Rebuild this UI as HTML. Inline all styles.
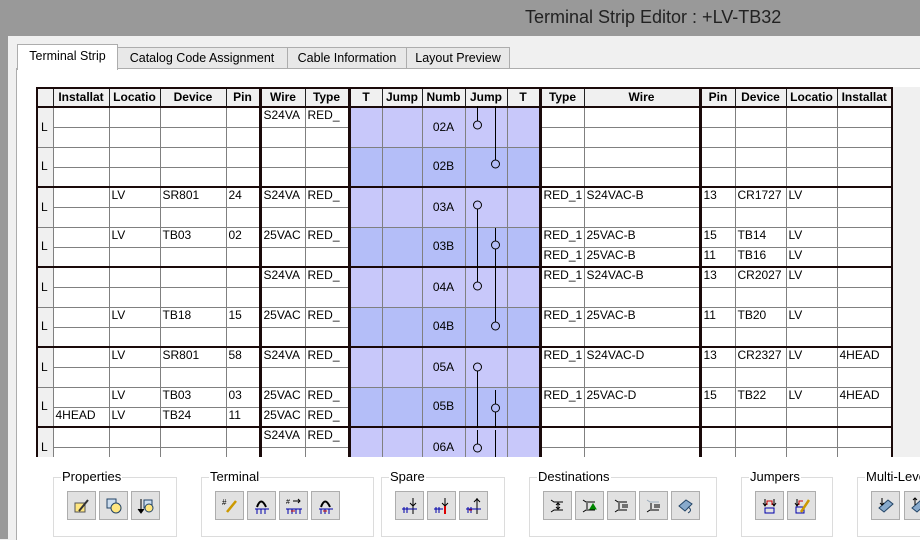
<!DOCTYPE html>
<html><head><meta charset="utf-8">
<style>
body{margin:0;width:920px;height:539px;overflow:hidden;background:#f0f0f0;font-family:"Liberation Sans",sans-serif;position:relative}
.title{position:absolute;left:0;top:0;width:920px;height:36px;background:#999}
.title span{position:absolute;left:525px;top:7px;font-size:18px;color:#222;font-family:"Liberation Sans",sans-serif}
.lstrip{position:absolute;left:0;top:36px;width:8px;height:503px;background:#999}
.page{position:absolute;left:16px;top:68px;width:904px;height:471px;background:#fff;border-top:1px solid #adadad;border-left:1px solid #adadad}
.tab{position:absolute;top:47px;height:20px;background:#e8e8e8;border:1px solid #adadad;border-bottom:none;font-size:12.5px;line-height:21px;text-align:center;color:#000}
.tab.act{top:44px;height:25px;background:#fff;z-index:2;line-height:23px}
.grid{position:absolute;left:36px;top:87px;width:884px;height:370px;overflow:hidden;background:#f0f0f0}
table{border-collapse:collapse;table-layout:fixed;width:855px;font-size:12px}
td,th{border:1px solid #808080;padding:0 0 0 2px;height:20px;box-sizing:border-box;white-space:nowrap;overflow:hidden;text-align:left;vertical-align:top;line-height:15px;background:#fff}
th{background:#f0f0f0;font-weight:bold;text-align:center;padding:0;vertical-align:middle;border-color:#222;height:19px}
td.l{background:#f0f0f0;vertical-align:middle;padding-left:3px}
td.a{background:#c8c8fa;text-align:center;vertical-align:middle;padding:0}
td.b{background:#b4bef8;text-align:center;vertical-align:middle;padding:0}
.k{border-right:3px solid #1a0a0a}
tbody{border-top:2px solid #1a0a0a}
table{border:2px solid #1a0a0a}
.bot{position:absolute;left:17px;top:457px;width:903px;height:82px;background:#fff}
.grp{position:absolute;top:477px;height:58px;border:1px solid #dcdcdc}
.grp span{position:absolute;top:-9px;left:7px;background:#fff;font-size:13px;padding:0 1px;color:#000}
.btn{position:absolute;top:491px;width:29px;height:29px;background:#e1e1e1;border:1px solid #adadad;box-sizing:border-box}
.btn svg{position:absolute;left:5px;top:5px}
</style></head><body>
<div class="title"><span>Terminal Strip Editor : +LV-TB32</span></div>
<div class="lstrip"></div>
<div class="page"></div>
<div class="tab act" style="left:17px;width:99px">Terminal Strip</div>
<div class="tab" style="left:116px;width:170px">Catalog Code Assignment</div>
<div class="tab" style="left:287px;width:118px">Cable Information</div>
<div class="tab" style="left:406px;width:102px">Layout Preview</div>

<div class="grid">
<table>
<colgroup><col style="width:16px"><col style="width:56px"><col style="width:51px"><col style="width:66px"><col style="width:34px"><col style="width:45px"><col style="width:44px"><col style="width:33px"><col style="width:40px"><col style="width:43px"><col style="width:42px"><col style="width:33px"><col style="width:44px"><col style="width:116px"><col style="width:35px"><col style="width:51px"><col style="width:51px"><col style="width:55px"></colgroup>
<thead><tr><th></th><th>Installat</th><th>Locatio</th><th>Device</th><th class="k">Pin</th><th>Wire</th><th class="k">Type</th><th>T</th><th>Jump</th><th>Numb</th><th>Jump</th><th class="k">T</th><th>Type</th><th class="k">Wire</th><th>Pin</th><th>Device</th><th>Locatio</th><th>Installat</th></tr></thead>
<tbody>
<tr><td class="l" rowspan="2">L</td><td></td><td></td><td></td><td class="k"></td><td>S24VA</td><td class="k">RED_</td><td class="a" rowspan="2"></td><td class="a" rowspan="2"></td><td class="a" rowspan="2">02A</td><td class="a" rowspan="2"></td><td class="a k" rowspan="2"></td><td></td><td class="k"></td><td></td><td></td><td></td><td></td></tr>
<tr><td></td><td></td><td></td><td class="k"></td><td></td><td class="k"></td><td></td><td class="k"></td><td></td><td></td><td></td><td></td></tr>
<tr><td class="l" rowspan="2">L</td><td></td><td></td><td></td><td class="k"></td><td></td><td class="k"></td><td class="b" rowspan="2"></td><td class="b" rowspan="2"></td><td class="b" rowspan="2">02B</td><td class="b" rowspan="2"></td><td class="b k" rowspan="2"></td><td></td><td class="k"></td><td></td><td></td><td></td><td></td></tr>
<tr><td></td><td></td><td></td><td class="k"></td><td></td><td class="k"></td><td></td><td class="k"></td><td></td><td></td><td></td><td></td></tr>
</tbody>
<tbody>
<tr><td class="l" rowspan="2">L</td><td></td><td>LV</td><td>SR801</td><td class="k">24</td><td>S24VA</td><td class="k">RED_</td><td class="a" rowspan="2"></td><td class="a" rowspan="2"></td><td class="a" rowspan="2">03A</td><td class="a" rowspan="2"></td><td class="a k" rowspan="2"></td><td>RED_1</td><td class="k">S24VAC-B</td><td>13</td><td>CR1727</td><td>LV</td><td></td></tr>
<tr><td></td><td></td><td></td><td class="k"></td><td></td><td class="k"></td><td></td><td class="k"></td><td></td><td></td><td></td><td></td></tr>
<tr><td class="l" rowspan="2">L</td><td></td><td>LV</td><td>TB03</td><td class="k">02</td><td>25VAC</td><td class="k">RED_</td><td class="b" rowspan="2"></td><td class="b" rowspan="2"></td><td class="b" rowspan="2">03B</td><td class="b" rowspan="2"></td><td class="b k" rowspan="2"></td><td>RED_1</td><td class="k">25VAC-B</td><td>15</td><td>TB14</td><td>LV</td><td></td></tr>
<tr><td></td><td></td><td></td><td class="k"></td><td></td><td class="k"></td><td>RED_1</td><td class="k">25VAC-B</td><td>11</td><td>TB16</td><td>LV</td><td></td></tr>
</tbody>
<tbody>
<tr><td class="l" rowspan="2">L</td><td></td><td></td><td></td><td class="k"></td><td>S24VA</td><td class="k">RED_</td><td class="a" rowspan="2"></td><td class="a" rowspan="2"></td><td class="a" rowspan="2">04A</td><td class="a" rowspan="2"></td><td class="a k" rowspan="2"></td><td>RED_1</td><td class="k">S24VAC-B</td><td>13</td><td>CR2027</td><td>LV</td><td></td></tr>
<tr><td></td><td></td><td></td><td class="k"></td><td></td><td class="k"></td><td></td><td class="k"></td><td></td><td></td><td></td><td></td></tr>
<tr><td class="l" rowspan="2">L</td><td></td><td>LV</td><td>TB18</td><td class="k">15</td><td>25VAC</td><td class="k">RED_</td><td class="b" rowspan="2"></td><td class="b" rowspan="2"></td><td class="b" rowspan="2">04B</td><td class="b" rowspan="2"></td><td class="b k" rowspan="2"></td><td>RED_1</td><td class="k">25VAC-B</td><td>11</td><td>TB20</td><td>LV</td><td></td></tr>
<tr><td></td><td></td><td></td><td class="k"></td><td></td><td class="k"></td><td></td><td class="k"></td><td></td><td></td><td></td><td></td></tr>
</tbody>
<tbody>
<tr><td class="l" rowspan="2">L</td><td></td><td>LV</td><td>SR801</td><td class="k">58</td><td>S24VA</td><td class="k">RED_</td><td class="a" rowspan="2"></td><td class="a" rowspan="2"></td><td class="a" rowspan="2">05A</td><td class="a" rowspan="2"></td><td class="a k" rowspan="2"></td><td>RED_1</td><td class="k">S24VAC-D</td><td>13</td><td>CR2327</td><td>LV</td><td>4HEAD</td></tr>
<tr><td></td><td></td><td></td><td class="k"></td><td></td><td class="k"></td><td></td><td class="k"></td><td></td><td></td><td></td><td></td></tr>
<tr><td class="l" rowspan="2">L</td><td></td><td>LV</td><td>TB03</td><td class="k">03</td><td>25VAC</td><td class="k">RED_</td><td class="b" rowspan="2"></td><td class="b" rowspan="2"></td><td class="b" rowspan="2">05B</td><td class="b" rowspan="2"></td><td class="b k" rowspan="2"></td><td>RED_1</td><td class="k">25VAC-D</td><td>15</td><td>TB22</td><td>LV</td><td>4HEAD</td></tr>
<tr><td>4HEAD</td><td>LV</td><td>TB24</td><td class="k">11</td><td>25VAC</td><td class="k">RED_</td><td></td><td class="k"></td><td></td><td></td><td></td><td></td></tr>
</tbody>
<tbody>
<tr><td class="l" rowspan="2">L</td><td></td><td></td><td></td><td class="k"></td><td>S24VA</td><td class="k">RED_</td><td class="a" rowspan="2"></td><td class="a" rowspan="2"></td><td class="a" rowspan="2">06A</td><td class="a" rowspan="2"></td><td class="a k" rowspan="2"></td><td></td><td class="k"></td><td></td><td></td><td></td><td></td></tr>
<tr><td></td><td></td><td></td><td class="k"></td><td></td><td class="k"></td><td></td><td class="k"></td><td></td><td></td><td></td><td></td></tr>
</tbody>
</table>
<svg style="position:absolute;left:0;top:0" width="884" height="370" fill="none" stroke="#000" stroke-width="1">
<g transform="translate(-36,-87)">
<path d="M477.5 106V121M495.5 106V160"/><circle cx="477.5" cy="125" r="4"/><circle cx="495.5" cy="164" r="4"/>
<path d="M477.5 209V268M495.5 228V241M495.5 249V268"/><circle cx="477.5" cy="205" r="4"/><circle cx="495.5" cy="245" r="4"/>
<path d="M477.5 268V282M495.5 268V322"/><circle cx="477.5" cy="286" r="4"/><circle cx="495.5" cy="326" r="4"/>
<path d="M477.5 371V428M495.5 390V404M495.5 412V428"/><circle cx="477.5" cy="367" r="4"/><circle cx="495.5" cy="408" r="4"/>
<path d="M477.5 430V444M495.5 430V460"/><circle cx="477.5" cy="448" r="4"/>
</g></svg>
</div>

<div class="bot"></div>
<div class="grp" style="left:53px;width:122px"><span>Properties</span></div>
<div class="grp" style="left:201px;width:171px"><span>Terminal</span></div>
<div class="grp" style="left:381px;width:122px"><span>Spare</span></div>
<div class="grp" style="left:529px;width:186px"><span>Destinations</span></div>
<div class="grp" style="left:741px;width:90px"><span>Jumpers</span></div>
<div class="grp" style="left:857px;width:80px"><span>Multi-Level</span></div>

<div class="btn" style="left:67px"><svg width="18" height="18"><rect x="2" y="6" width="10" height="9" fill="#ffe680" stroke="#555"/><path d="M6 14L15 3" stroke="#333" stroke-width="2"/></svg></div>
<div class="btn" style="left:99px"><svg width="18" height="18"><rect x="2" y="2" width="9" height="9" fill="#cde" stroke="#246"/><circle cx="11" cy="11" r="5" fill="#ffe680" stroke="#246"/></svg></div>
<div class="btn" style="left:131px"><svg width="18" height="18"><path d="M4 2V15M1 12L4 16L7 12" stroke="#000"/><rect x="7" y="3" width="8" height="8" fill="#cde" stroke="#246"/><circle cx="12" cy="11" r="4" fill="#ffe680" stroke="#246"/></svg></div>

<div class="btn" style="left:215px"><svg width="18" height="18"><text x="1" y="8" font-size="8" fill="#000" font-family="Liberation Sans">#</text><path d="M6 15L15 4" stroke="#c90" stroke-width="2.5"/></svg></div>
<div class="btn" style="left:247px"><svg width="18" height="18" fill="none" stroke="#000"><path d="M4 10Q8 -1 13 10" stroke-width="2"/><path d="M2 12H16M4 12V17M8 12V17M12 12V17" stroke="#00a"/></svg></div>
<div class="btn" style="left:279px"><svg width="18" height="18" fill="none" stroke="#000"><text x="1" y="7" font-size="7" fill="#000" stroke="none">#</text><path d="M8 4H15M13 2L15 4L13 6"/><path d="M1 12H17M3 12V17M7 12V17M11 12V17M15 12V17" stroke="#00a"/><path d="M6 14h4" stroke="#c00"/></svg></div>
<div class="btn" style="left:311px"><svg width="18" height="18" fill="none" stroke="#000"><path d="M4 10Q8 -1 13 10" stroke-width="2"/><path d="M2 12H16M4 12V17M8 12V17M12 12V17" stroke="#00a"/><path d="M6 14h4" stroke="#c00"/></svg></div>

<div class="btn" style="left:395px"><svg width="18" height="18" fill="none"><path d="M12 1V17M9 6L12 9L15 6" stroke="#000"/><path d="M1 12H16M3 10V16M6 10V16" stroke="#00a"/></svg></div>
<div class="btn" style="left:427px"><svg width="18" height="18" fill="none"><path d="M12 1V9M9 6L12 9L15 6" stroke="#000"/><path d="M12 9V17" stroke="#d00" stroke-width="2"/><path d="M1 12H10M3 10V16M6 10V16" stroke="#00a"/></svg></div>
<div class="btn" style="left:459px"><svg width="18" height="18" fill="none"><path d="M12 17V1M9 5L12 2L15 5" stroke="#000"/><path d="M1 12H16M3 10V16M6 10V16" stroke="#00a"/><path d="M4 13h3" stroke="#c00"/></svg></div>

<div class="btn" style="left:543px"><svg width="18" height="18" fill="none" stroke="#000"><path d="M2 3L5 5H14M2 15L5 13H14M9 6V12M7 8L9 6L11 8M7 10L9 12L11 10"/></svg></div>
<div class="btn" style="left:575px"><svg width="18" height="18" fill="none" stroke="#000"><path d="M2 3L5 5H14M2 15L5 13H14M6 6V12"/><path d="M9 12L12 7L15 12Z" fill="#080" stroke="#080"/></svg></div>
<div class="btn" style="left:607px"><svg width="18" height="18" fill="none" stroke="#000"><path d="M2 3L5 5H14M2 15L5 13H14M6 6V12M9 8H15M9 10H15"/></svg></div>
<div class="btn" style="left:639px"><svg width="18" height="18" fill="none" stroke="#000"><path d="M2 3L5 5H14" stroke="#9ab"/><path d="M2 15L5 13H14M6 6V12M9 8H15M9 10H15"/></svg></div>
<div class="btn" style="left:671px"><svg width="18" height="18" fill="none" stroke="#246"><path d="M2 9L9 3L15 7L8 14Z" fill="#8ac"/><path d="M11 10Q16 13 11 16"/></svg></div>

<div class="btn" style="left:755px"><svg width="18" height="18" fill="none" stroke="#000"><path d="M4 2V9M13 2V9M2 6L4 9L6 6M11 6L13 9L15 6"/><path d="M6 8V4H11V8" stroke="#c00"/><rect x="4" y="11" width="9" height="5" stroke="#00a"/></svg></div>
<div class="btn" style="left:787px"><svg width="18" height="18" fill="none" stroke="#000"><path d="M4 2V9M2 6L4 9L6 6"/><path d="M6 8V4H10" stroke="#c00"/><rect x="3" y="10" width="8" height="6" stroke="#00a"/><path d="M8 15L16 3" stroke="#c90" stroke-width="2.5"/></svg></div>

<div class="btn" style="left:871px"><svg width="18" height="18" fill="none" stroke="#246"><path d="M2 11L11 3L16 7L7 15Z" fill="#8ac"/><path d="M5 1V8M3 6L5 8L7 6" stroke="#000"/></svg></div>
<div class="btn" style="left:904px"><svg width="18" height="18" fill="none" stroke="#246"><path d="M2 11L11 3L16 7L7 15Z" fill="#8ac"/><path d="M5 8V1M3 3L5 1L7 3" stroke="#000"/></svg></div>
</body></html>
